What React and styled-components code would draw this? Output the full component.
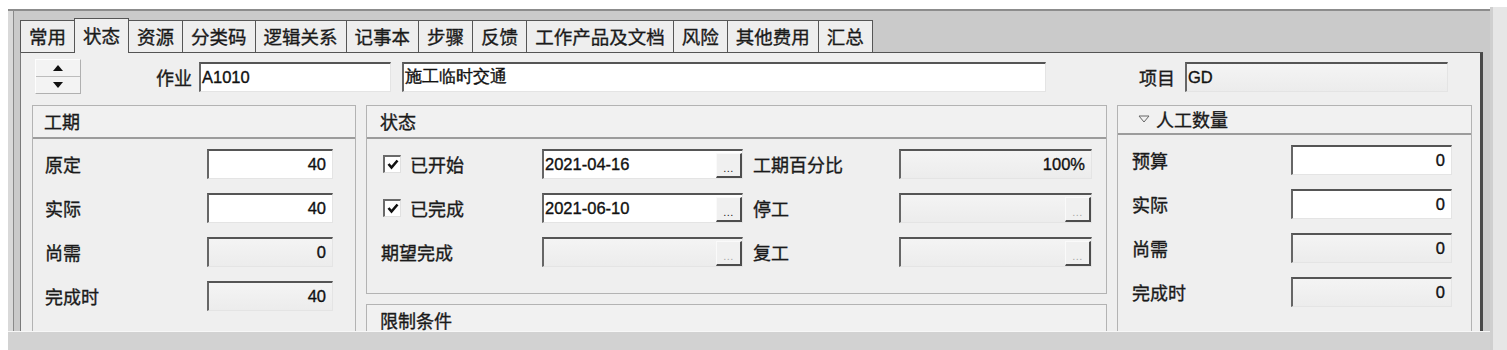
import React from "react"
import styled, { createGlobalStyle, css } from "styled-components"

const cjk = `"Noto Sans CJK SC", "Noto Sans", sans-serif`
const latin = `"Liberation Sans", Arial, sans-serif`

const GlobalStyle = createGlobalStyle`
  html, body {
    margin: 0;
    padding: 0;
    background: #fff;
    overflow: hidden;
  }
  body {
    font-family: ${cjk};
    color: #1a1a1a;
    -webkit-text-stroke: 0.35px currentColor;
  }
`

const tabs = ["常用", "状态", "资源", "分类码", "逻辑关系", "记事本", "步骤", "反馈", "工作产品及文档", "风险", "其他费用", "汇总"]

const durationRows = [
  { label: "原定", value: "40", tone: "white" },
  { label: "实际", value: "40", tone: "white" },
  { label: "尚需", value: "0", tone: "gray" },
  { label: "完成时", value: "40", tone: "gray" },
]

const laborRows = [
  { label: "预算", value: "0", tone: "white" },
  { label: "实际", value: "0", tone: "white" },
  { label: "尚需", value: "0", tone: "gray" },
  { label: "完成时", value: "0", tone: "gray" },
]

const statusRows = [
  { check: true, label: "已开始", date: "2021-04-16", dateTone: "white", label2: "工期百分比", value2: "100%", button2: false },
  { check: true, label: "已完成", date: "2021-06-10", dateTone: "white", label2: "停工", value2: "", button2: true },
  { check: false, label: "期望完成", date: "", dateTone: "gray", label2: "复工", value2: "", button2: true },
]

const Page = styled.div`
  display: flex;
  height: 350px;
  padding: 7px 0 0 8px;
  box-sizing: border-box;
`

const Window = styled.div`
  width: 1482px;
  margin-top: 2px;
  display: flex;
  flex-direction: column;
  background: #cacaca;
  border-top: 2px solid #8c8c8c;
`

const SideStrip = styled.div`
  flex: 1;
  background: #e6e6e6;
  border-left: 3px solid #cfcfcf;
`

const Workspace = styled.div`
  flex: 1;
  min-height: 0;
  display: flex;
  border-left: 5px solid #d9d9d9;
`

const Frame = styled.div`
  flex: 1;
  min-width: 0;
  display: flex;
  flex-direction: column;
  border-left: 1px solid #8a8a8a;
  padding: 0 7px 0 6px;
`

const BottomBar = styled.div`
  height: 18px;
  background: #d2d2d2;
  border-top: 1px solid #f7f7f7;
`

const TabStrip = styled.div`
  display: flex;
  align-items: flex-end;
  padding: 9px 0 0 1px;
`

const Tab = styled.div`
  height: 32px;
  box-sizing: border-box;
  padding: 0 8px;
  margin-left: -1px;
  border: 1px solid #565656;
  border-bottom: none;
  background: #eeeeee;
  font: 18.5px/30px ${cjk};
  white-space: nowrap;

  ${(p) =>
    p.$active &&
    css`
      height: 35px;
      margin-top: -2px;
      margin-bottom: -1px;
      line-height: 32px;
      background: #efefef;
      z-index: 1;
    `}
`

const TabBody = styled.div`
  flex: 1;
  min-height: 0;
  overflow: hidden;
  background: #efefef;
  border-top: 1px solid #545454;
  border-left: 1px solid #7a7a7a;
  border-right: 3px solid #474747;
  padding: 6px 0 0 11px;
`

const TopRow = styled.div`
  display: flex;
  align-items: center;
  height: 35px;
  padding-left: 3px;
`

const Spinner = styled.div`
  width: 46px;
  height: 35px;
  box-sizing: border-box;
  display: grid;
  grid-template-rows: 1fr 1fr;
  border: 1px solid #fdfdfd;
  border-right-color: #b0b0b0;
  border-bottom-color: #b0b0b0;
  background: #f3f3f3;
`

const SpinHalf = styled.div`
  display: flex;
  align-items: center;
  justify-content: center;
  border-bottom: ${(p) => (p.$top ? "1px solid #bcbcbc" : "none")};
`

const Label = styled.span`
  font: 18px/1 ${cjk};
  white-space: nowrap;
  margin-left: ${(p) => p.$gap || 0}px;
`

const Field = styled.div`
  width: ${(p) => (p.$width ? `${p.$width}px` : "auto")};
  height: 30px;
  box-sizing: border-box;
  margin-left: ${(p) => p.$gap || 0}px;
  display: flex;
  align-items: center;
  justify-content: ${(p) => (p.$align === "right" ? "flex-end" : "flex-start")};
  padding: ${(p) => (p.$align === "right" ? "0 6px 0 0" : "0 0 0 1px")};
  background: ${(p) => (p.$tone === "gray" ? "linear-gradient(#f4f4f4, #ececec)" : "#ffffff")};
  border-top: 2px solid #555;
  border-left: 2px solid #666;
  border-right: 1px solid #e4e4e4;
  border-bottom: 1px solid #e4e4e4;
  font: 16.5px ${latin};
  color: #111;
  overflow: hidden;
`

const DateField = styled(Field)`
  padding: 0 0 0 1px;
  align-items: stretch;
`

const DateText = styled.span`
  flex: 1;
  align-self: center;
`

const Ellipsis = styled.div`
  width: 26px;
  margin: 2px 0 0;
  box-sizing: border-box;
  display: flex;
  align-items: flex-end;
  justify-content: center;
  padding-bottom: 2px;
  background: #f0f0f0;
  border-top: 1px solid #fafafa;
  border-left: 1px solid #fafafa;
  border-right: 2px solid #4d4d4d;
  border-bottom: 2px solid #4d4d4d;
  font: 11px/1 ${latin};
  color: ${(p) => (p.$disabled ? "#a8a8a8" : "#222")};
  -webkit-text-stroke: 0;
  letter-spacing: 0.5px;
`

const Panels = styled.div`
  display: grid;
  grid-template-columns: 324px 741px 355px;
  column-gap: 10px;
  margin-top: 11px;
  align-items: start;
`

const Column = styled.div`
  display: flex;
  flex-direction: column;
  gap: 10px;
`

const Panel = styled.section`
  border: 1px solid #b3b3b3;
  border-bottom: ${(p) => (p.$open ? "none" : "1px solid #b3b3b3")};
  min-height: ${(p) => p.$minHeight || 0}px;
  box-sizing: border-box;
`

const PanelHeader = styled.div`
  height: ${(p) => p.$height || 33}px;
  box-sizing: border-box;
  display: flex;
  align-items: center;
  gap: 6px;
  padding: 0 0 2px ${(p) => p.$indent || 11}px;
  background: #f1f1f1;
  border-bottom: 2px solid #9c9c9c;
  font: 18px/1 ${cjk};
`

const Rows = styled.div`
  display: grid;
  grid-template-columns: ${(p) => p.$cols};
  grid-auto-rows: 30px;
  row-gap: 14px;
  align-items: center;
  padding: 10px 0 ${(p) => p.$bottom || 0}px ${(p) => p.$indent}px;
`

const CheckLabel = styled.div`
  display: flex;
  align-items: center;
  gap: 9px;
  padding-left: 2px;
`

const CheckBox = styled.span`
  width: 18px;
  height: 18px;
  box-sizing: border-box;
  display: flex;
  align-items: center;
  justify-content: center;
  background: #fff;
  border-top: 2px solid #6a6a6a;
  border-left: 2px solid #6a6a6a;
  border-right: 1px solid #e0e0e0;
  border-bottom: 1px solid #e0e0e0;
`

function SpinArrow({ up }) {
  return (
    <svg width="10" height="6" viewBox="0 0 10 6">
      <path d={up ? "M0 6 L5 0 L10 6 Z" : "M0 0 L10 0 L5 6 Z"} fill="#111" />
    </svg>
  )
}

function Check() {
  return (
    <svg width="12" height="11" viewBox="0 0 12 11">
      <path d="M1.5 5 L4.5 8.5 L10.5 1.5" fill="none" stroke="#111" strokeWidth="2.6" />
    </svg>
  )
}

function Caret() {
  return (
    <svg width="12" height="8" viewBox="0 0 12 8">
      <path d="M1 1 L11 1 L6 7 Z" fill="none" stroke="#666" strokeWidth="1" />
    </svg>
  )
}

function NumberRows({ rows, cols, indent, width }) {
  return (
    <Rows $cols={cols} $indent={indent}>
      {rows.map((r) => (
        <React.Fragment key={r.label}>
          <Label>{r.label}</Label>
          <Field $width={width} $tone={r.tone} $align="right">{r.value}</Field>
        </React.Fragment>
      ))}
    </Rows>
  )
}

function StatusPanel() {
  return (
    <Panel>
      <PanelHeader $indent={13}>状态</PanelHeader>
      <Rows $cols="161px 201px 156px 193px" $indent={14} $bottom={26}>
        {statusRows.map((r) => (
          <React.Fragment key={r.label}>
            {r.check ? (
              <CheckLabel>
                <CheckBox><Check /></CheckBox>
                <Label>{r.label}</Label>
              </CheckLabel>
            ) : (
              <Label>{r.label}</Label>
            )}
            <DateField $tone={r.dateTone}>
              <DateText>{r.date}</DateText>
              <Ellipsis $disabled={!r.date}>...</Ellipsis>
            </DateField>
            <Label $gap={10}>{r.label2}</Label>
            {r.button2 ? (
              <DateField $tone="gray">
                <DateText />
                <Ellipsis $disabled>...</Ellipsis>
              </DateField>
            ) : (
              <Field $tone="gray" $align="right">{r.value2}</Field>
            )}
          </React.Fragment>
        ))}
      </Rows>
    </Panel>
  )
}

export default function App() {
  return (
    <>
      <GlobalStyle />
      <Page>
        <Window>
          <Workspace>
            <Frame>
              <TabStrip>
                {tabs.map((t) => (
                  <Tab key={t} $active={t === "状态"}>{t}</Tab>
                ))}
              </TabStrip>
              <TabBody>
                <TopRow>
                  <Spinner>
                    <SpinHalf $top><SpinArrow up /></SpinHalf>
                    <SpinHalf><SpinArrow /></SpinHalf>
                  </Spinner>
                  <Label $gap={75}>作业</Label>
                  <Field $width={192} $gap={7}>A1010</Field>
                  <Field $width={644} $gap={11}>施工临时交通</Field>
                  <Label $gap={93}>项目</Label>
                  <Field $width={263} $gap={10} $tone="gray">GD</Field>
                </TopRow>

                <Panels>
                  <Panel $open $minHeight={240}>
                    <PanelHeader>工期</PanelHeader>
                    <NumberRows rows={durationRows} cols="162px 126px" indent={12} width={126} />
                  </Panel>

                  <Column>
                    <StatusPanel />
                    <Panel $open $minHeight={40}>
                      <PanelHeader $indent={13}>限制条件</PanelHeader>
                    </Panel>
                  </Column>

                  <Panel $open $minHeight={240}>
                    <PanelHeader $height={29} $indent={20}>
                      <Caret />
                      人工数量
                    </PanelHeader>
                    <NumberRows rows={laborRows} cols="159px 161px" indent={14} width={161} />
                  </Panel>
                </Panels>
              </TabBody>
            </Frame>
          </Workspace>
          <BottomBar />
        </Window>
        <SideStrip />
      </Page>
    </>
  )
}
